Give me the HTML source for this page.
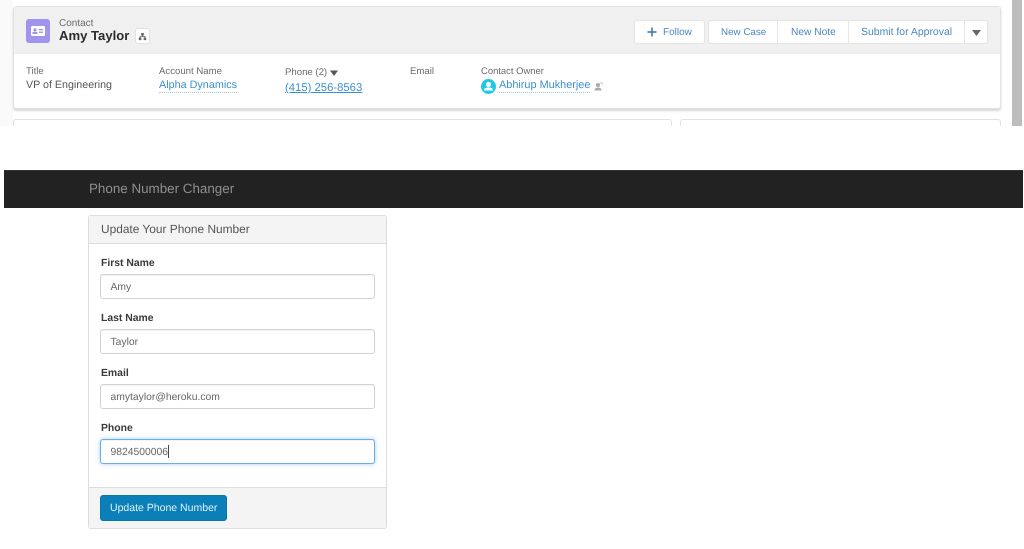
<!DOCTYPE html>
<html><head><meta charset="utf-8"><style>
html,body{margin:0;padding:0;background:#fff}
body{width:1024px;height:549px;position:relative;overflow:hidden;font-family:"Liberation Sans",sans-serif;text-rendering:geometricPrecision;filter:blur(.35px)}
div{position:absolute;box-sizing:border-box}
.t{white-space:nowrap;line-height:14px}
.lb{font-size:9.6px;color:#6b6b6b}
.lk{font-size:10.8px;color:#3b8fd0}
.bl{font-size:10px;color:#4a87bf;text-align:center}
.lab{font-size:10.4px;font-weight:bold;color:#3a3a3a;left:101px;white-space:nowrap;line-height:14px}
.inp{left:100px;width:275px;height:25px;background:#fff;border:1px solid #d2d2d2;border-radius:3px;box-shadow:inset 0 1px 1px rgba(0,0,0,.05);font-size:10.35px;color:#666;padding-left:9.5px;line-height:25px}
</style></head><body>
<div style="left:0;top:0;width:13px;height:126px;background:#fafafa"></div>
<div style="left:13px;top:6px;width:988px;height:103px;background:#fff;border:1px solid #e2e2e2;border-radius:3px;box-shadow:0 2px 2px rgba(0,0,0,.16)"></div>
<div style="left:14px;top:7px;width:986px;height:47px;background:#f0f0f0"></div>
<div style="left:13px;top:119px;width:659px;height:10px;border:1px solid #e2e2e2;border-radius:3px"></div>
<div style="left:680px;top:119px;width:321px;height:10px;border:1px solid #e2e2e2;border-radius:3px"></div>
<div style="left:1012px;top:0;width:10px;height:126px;background:#bdbdbd"></div>
<div style="left:0;top:126px;width:1024px;height:44px;background:#fff"></div>

<div style="left:26px;top:19px;width:24px;height:24px;background:#a094ed;border-radius:3px"></div>
<svg style="position:absolute;left:26px;top:19px" width="24" height="24"><rect x="5" y="7" width="14" height="10" rx="1.500" fill="#fff"/><circle cx="9" cy="11" r="1.600" fill="#a094ed"/><rect x="6.500" y="13" width="5" height="2" fill="#a094ed"/><rect x="13" y="10" width="4" height="1.300" fill="#a094ed"/><rect x="13" y="12.600" width="4" height="1.300" fill="#a094ed"/></svg>
<div class="t lb" style="left:59px;top:17px;font-size:10px">Contact</div>
<div class="t" style="left:59px;top:29px;font-size:13.100px;font-weight:bold;color:#2b2b2b">Amy Taylor</div>
<div style="left:135px;top:28px;width:15px;height:16px;background:#fff;border:1px solid #e2e2e2;border-radius:3px"></div>
<svg style="position:absolute;left:135px;top:28px" width="15" height="16"><rect x="6.200" y="5" width="2.600" height="2.600" fill="#666"/><rect x="3.800" y="9.500" width="2.600" height="2.600" fill="#666"/><rect x="8.600" y="9.500" width="2.600" height="2.600" fill="#666"/><path d="M7.500 7v2M5 10V8.500h5V10" stroke="#666" fill="none" stroke-width=".7"/></svg>

<div style="left:634px;top:20px;width:71px;height:24px;background:#fff;border:1px solid #e4e4e4;border-radius:3px"></div>
<svg style="position:absolute;left:646px;top:26px" width="12" height="12"><path d="M6 1.500v9M1.500 6h9" stroke="#2f6ea8" stroke-width="1.400"/></svg>
<div class="t bl" style="left:663px;top:26px">Follow</div>
<div style="left:708px;top:20px;width:280px;height:24px;background:#fff;border:1px solid #e4e4e4;border-radius:3px"></div>
<div style="left:777px;top:21px;width:1px;height:22px;background:#e8e8e8"></div>
<div style="left:848px;top:21px;width:1px;height:22px;background:#e8e8e8"></div>
<div style="left:964px;top:21px;width:1px;height:22px;background:#e8e8e8"></div>
<div class="t bl" style="left:721px;top:26px;font-size:9.800px">New Case</div>
<div class="t bl" style="left:791px;top:26px;font-size:10.200px">New Note</div>
<div class="t bl" style="left:861px;top:26px;font-size:10.450px">Submit for Approval</div>
<svg style="position:absolute;left:971px;top:29px" width="11" height="8"><path d="M1 1h9L5.500 7z" fill="#666"/></svg>

<div class="t lb" style="left:26px;top:65px">Title</div>
<div class="t" style="left:26px;top:78px;font-size:10.700px;color:#555">VP of Engineering</div>
<div class="t lb" style="left:159px;top:65px">Account Name</div>
<div class="t lk" style="left:159px;top:78px;border-bottom:1px dotted #9cc8ea;height:15px">Alpha Dynamics</div>
<div class="t lb" style="left:285px;top:66px">Phone (2)</div>
<svg style="position:absolute;left:329px;top:70px" width="10" height="7"><path d="M1 .500h8L5 6z" fill="#555"/></svg>
<div class="t lk" style="left:285px;top:81px;font-size:11.300px;text-decoration:underline">(415) 256-8563</div>
<div class="t lb" style="left:410px;top:65px">Email</div>
<div class="t lb" style="left:481px;top:65px;font-size:9.450px">Contact Owner</div>
<div style="left:481px;top:79px;width:15px;height:15px;border-radius:50%;background:#1fc8e6"></div>
<svg style="position:absolute;left:481px;top:79px" width="15" height="15"><circle cx="7.500" cy="5.500" r="2.600" fill="#fff"/><path d="M3 11.500c0-2.300 2-3 4.500-3s4.500.700 4.500 3z" fill="#fff"/></svg>
<div class="t lk" style="left:499px;top:78px;border-bottom:1px dotted #9cc8ea;height:15px;font-size:10.900px">Abhirup Mukherjee</div>
<svg style="position:absolute;left:593px;top:80px" width="11" height="12"><circle cx="5" cy="5" r="2" fill="#aaa"/><path d="M1.500 10.500c0-2 1.500-3 3.500-3s3.500 1 3.500 3z" fill="#aaa"/><path d="M7.500 2.500a2 2 0 0 1 2 2" stroke="#bbb" fill="none"/></svg>

<div style="left:4px;top:170px;width:1019px;height:38px;background:#222;border-top:1px solid #333"></div>
<div class="t" style="left:89px;top:182px;font-size:13.400px;color:#8f8f8f">Phone Number Changer</div>

<div style="left:88px;top:215px;width:299px;height:314px;background:#fff;border:1px solid #ddd;border-radius:3px"></div>
<div style="left:89px;top:216px;width:297px;height:28px;background:#f4f4f4;border-bottom:1px solid #ddd;border-radius:3px 3px 0 0"></div>
<div class="t" style="left:101px;top:222px;font-size:11.900px;color:#555">Update Your Phone Number</div>

<div class="lab" style="top:257px">First Name</div>
<div class="inp" style="top:274px">Amy</div>
<div class="lab" style="top:312px">Last Name</div>
<div class="inp" style="top:329px">Taylor</div>
<div class="lab" style="top:367px">Email</div>
<div class="inp" style="top:384px">amytaylor@heroku.com</div>
<div class="lab" style="top:422px">Phone</div>
<div class="inp" style="top:439px;border-color:#66afe9;box-shadow:inset 0 1px 1px rgba(0,0,0,.05),0 0 5px rgba(102,175,233,.6)">9824500006<span style="display:inline-block;width:1px;height:13px;background:#444;vertical-align:-3px"></span></div>

<div style="left:89px;top:487px;width:297px;height:41px;background:#f4f4f4;border-top:1px solid #ddd;border-radius:0 0 3px 3px"></div>
<div style="left:100px;top:495px;width:127px;height:26px;background:#0a7fb8;border:1px solid #0a76ab;border-radius:3px"></div>
<div class="t" style="left:110px;top:501px;font-size:10.500px;color:#e4f2f9">Update Phone Number</div>
</body></html>
